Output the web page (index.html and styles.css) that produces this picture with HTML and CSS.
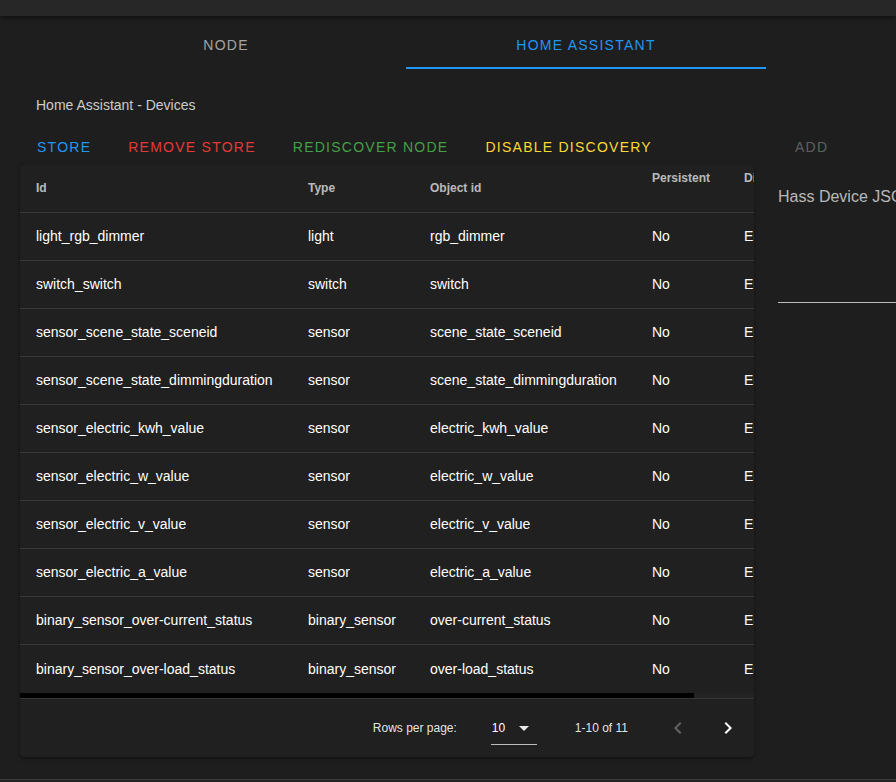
FILE: index.html
```html
<!DOCTYPE html>
<html lang="en">
<head>
<meta charset="utf-8">
<title>Home Assistant - Devices</title>
<link rel="stylesheet" href="styles.css">
</head>
<body>
<div class="appbar"></div>

<nav class="tabs">
  <div class="tab">Node</div>
  <div class="tab active">Home Assistant</div>
</nav>

<main class="panel">
  <div class="title">Home Assistant - Devices</div>

  <div class="actions left-actions">
    <button class="btn c-blue">Store</button>
    <button class="btn c-red">Remove Store</button>
    <button class="btn c-green">Rediscover Node</button>
    <button class="btn c-yellow">Disable Discovery</button>
  </div>

  <div class="actions right-actions">
    <button class="btn c-disabled">Add</button>
  </div>

  <section class="card">
    <div class="table-clip">
      <div class="table">
        <div class="row head">
          <div class="cell">Id</div>
          <div class="cell">Type</div>
          <div class="cell">Object id</div>
          <div class="cell top">Persistent</div>
          <div class="cell top">Discovery</div>
        </div>
        <div class="row"><div class="cell">light_rgb_dimmer</div><div class="cell">light</div><div class="cell">rgb_dimmer</div><div class="cell">No</div><div class="cell">Enabled</div></div>
        <div class="row"><div class="cell">switch_switch</div><div class="cell">switch</div><div class="cell">switch</div><div class="cell">No</div><div class="cell">Enabled</div></div>
        <div class="row"><div class="cell">sensor_scene_state_sceneid</div><div class="cell">sensor</div><div class="cell">scene_state_sceneid</div><div class="cell">No</div><div class="cell">Enabled</div></div>
        <div class="row"><div class="cell">sensor_scene_state_dimmingduration</div><div class="cell">sensor</div><div class="cell">scene_state_dimmingduration</div><div class="cell">No</div><div class="cell">Enabled</div></div>
        <div class="row"><div class="cell">sensor_electric_kwh_value</div><div class="cell">sensor</div><div class="cell">electric_kwh_value</div><div class="cell">No</div><div class="cell">Enabled</div></div>
        <div class="row"><div class="cell">sensor_electric_w_value</div><div class="cell">sensor</div><div class="cell">electric_w_value</div><div class="cell">No</div><div class="cell">Enabled</div></div>
        <div class="row"><div class="cell">sensor_electric_v_value</div><div class="cell">sensor</div><div class="cell">electric_v_value</div><div class="cell">No</div><div class="cell">Enabled</div></div>
        <div class="row"><div class="cell">sensor_electric_a_value</div><div class="cell">sensor</div><div class="cell">electric_a_value</div><div class="cell">No</div><div class="cell">Enabled</div></div>
        <div class="row"><div class="cell">binary_sensor_over-current_status</div><div class="cell">binary_sensor</div><div class="cell">over-current_status</div><div class="cell">No</div><div class="cell">Enabled</div></div>
        <div class="row last"><div class="cell">binary_sensor_over-load_status</div><div class="cell">binary_sensor</div><div class="cell">over-load_status</div><div class="cell">No</div><div class="cell">Enabled</div></div>
      </div>
    </div>
    <div class="hscroll"><div class="hscroll-thumb" style="width: 674px"></div></div>
    <div class="card-footer">
      <span class="rows-label">Rows per page:</span>
      <div class="select">
        <span class="select-value">10</span>
        <svg class="select-arrow" width="24" height="24" viewBox="0 0 24 24"><path d="M7 10l5 5 5-5z" fill="currentColor"/></svg>
      </div>
      <span class="page-info">1-10 of 11</span>
      <button class="icon-btn disabled" aria-label="Previous page">
        <svg width="24" height="24" viewBox="0 0 24 24"><path d="M15.41 16.59L10.83 12l4.58-4.59L14 6l-6 6 6 6 1.41-1.41z" fill="currentColor"/></svg>
      </button>
      <button class="icon-btn" aria-label="Next page">
        <svg width="24" height="24" viewBox="0 0 24 24"><path d="M8.59 16.59L13.17 12 8.59 7.41 10 6l6 6-6 6-1.41-1.41z" fill="currentColor"/></svg>
      </button>
    </div>
  </section>

  <div class="json-field">
    <label class="json-label">Hass Device JSON</label>
    <div class="json-input"></div>
  </div>
</main>

<footer class="page-footer"></footer>
</body>
</html>
```

FILE: styles.css
```css
* { box-sizing: border-box; }

html, body {
  margin: 0;
  padding: 0;
  height: 100%;
}

body {
  background: #1e1e1e;
  color: #fff;
  font-family: "Liberation Sans", Arial, sans-serif;
  font-size: 14px;
  overflow: hidden;
}

.appbar {
  height: 16px;
  background: #272727;
  box-shadow: 0 2px 4px rgba(0, 0, 0, 0.45);
  position: relative;
  z-index: 1;
}

.tabs {
  display: flex;
  margin: 5px 0 0 46px;
  height: 48px;
}

.tab {
  width: 360px;
  height: 48px;
  display: flex;
  align-items: center;
  justify-content: center;
  text-transform: uppercase;
  letter-spacing: 1.25px;
  font-size: 14px;
  color: rgba(255, 255, 255, 0.6);
  border-bottom: 2px solid transparent;
  padding-top: 2px;
}

.tab.active {
  color: #2196f3;
  border-bottom-color: #2196f3;
}

.panel {
  display: grid;
  grid-template-columns: 758px 758px;
  grid-template-rows: auto auto auto;
  padding-left: 8px;
  margin-top: 26px;
}

.title {
  grid-column: 1;
  grid-row: 1;
  padding: 0 12px 0 28px;
  line-height: 20px;
  font-size: 14px;
  color: rgba(255, 255, 255, 0.78);
}

.actions {
  display: flex;
  height: 36px;
  margin-top: 14px;
  padding: 0 12px 0 13px;
}

.left-actions { grid-column: 1; grid-row: 2; }
.right-actions { grid-column: 2; grid-row: 2; }

.btn {
  height: 36px;
  padding: 0 16px;
  margin-right: 5px;
  border: 0;
  background: transparent;
  font-family: "Liberation Sans", Arial, sans-serif;
  font-size: 14px;
  letter-spacing: 1.25px;
  text-transform: uppercase;
  cursor: pointer;
}

.c-blue { color: #2196f3; }
.c-red { color: #e53935; }
.c-green { color: #43a047; }
.c-yellow { color: #fdd835; }
.c-disabled { color: rgba(255, 255, 255, 0.3); }

.card {
  grid-column: 1;
  grid-row: 3;
  margin: 0 12px;
  background: #202020;
  border-radius: 4px;
  box-shadow: 0 2px 2px rgba(0, 0, 0, 0.25), 0 1px 5px rgba(0, 0, 0, 0.2);
}

.table-clip {
  overflow: hidden;
}

.table {
  width: 799px;
}

.row {
  display: grid;
  grid-template-columns: 272px 122px 222px 92px 91px;
  height: 48px;
  border-bottom: 1px solid #383838;
}

.row.last { border-bottom: 0; }

.cell {
  display: flex;
  align-items: center;
  padding: 0 16px 1px;
  white-space: nowrap;
  font-size: 14px;
  color: #fff;
}

.head .cell {
  font-size: 12px;
  font-weight: bold;
  color: rgba(255, 255, 255, 0.7);
}

.head .cell.top {
  align-items: flex-start;
  padding-top: 6px;
  line-height: 14px;
}

.hscroll {
  height: 5px;
  background: #232323;
}

.hscroll-thumb {
  height: 5px;
  background: #000;
}

.card-footer {
  display: flex;
  align-items: center;
  justify-content: flex-end;
  height: 59px;
  border-top: 1px solid #383838;
  padding-right: 8px;
  font-size: 12px;
}

.rows-label {
  color: rgba(255, 255, 255, 0.9);
  margin-right: 34px;
}

.select {
  display: flex;
  align-items: center;
  width: 46px;
  height: 34px;
  padding-left: 1px;
  border-bottom: 1px solid rgba(255, 255, 255, 0.7);
  margin-right: 38px;
}

.select-value { color: #fff; }

.select-arrow {
  margin-left: 7px;
  color: #e8e8e8;
}

.page-info {
  color: rgba(255, 255, 255, 0.9);
  margin-right: 32px;
}

.icon-btn {
  width: 36px;
  height: 36px;
  padding: 0;
  border: 0;
  background: transparent;
  display: flex;
  align-items: center;
  justify-content: center;
  color: #fff;
}

.icon-btn + .icon-btn { margin-left: 14px; }

.icon-btn.disabled { color: rgba(255, 255, 255, 0.3); }

.json-field {
  grid-column: 2;
  grid-row: 3;
  margin: 22px 12px 0;
  align-self: start;
}

.json-label {
  display: block;
  font-size: 16px;
  line-height: 20px;
  color: rgba(255, 255, 255, 0.7);
}

.json-input {
  height: 96px;
  border-bottom: 1px solid rgba(255, 255, 255, 0.7);
}

.page-footer {
  margin-top: 22px;
  height: 10px;
  border-top: 1px solid #3e3e3e;
  background: #232323;
}
```
